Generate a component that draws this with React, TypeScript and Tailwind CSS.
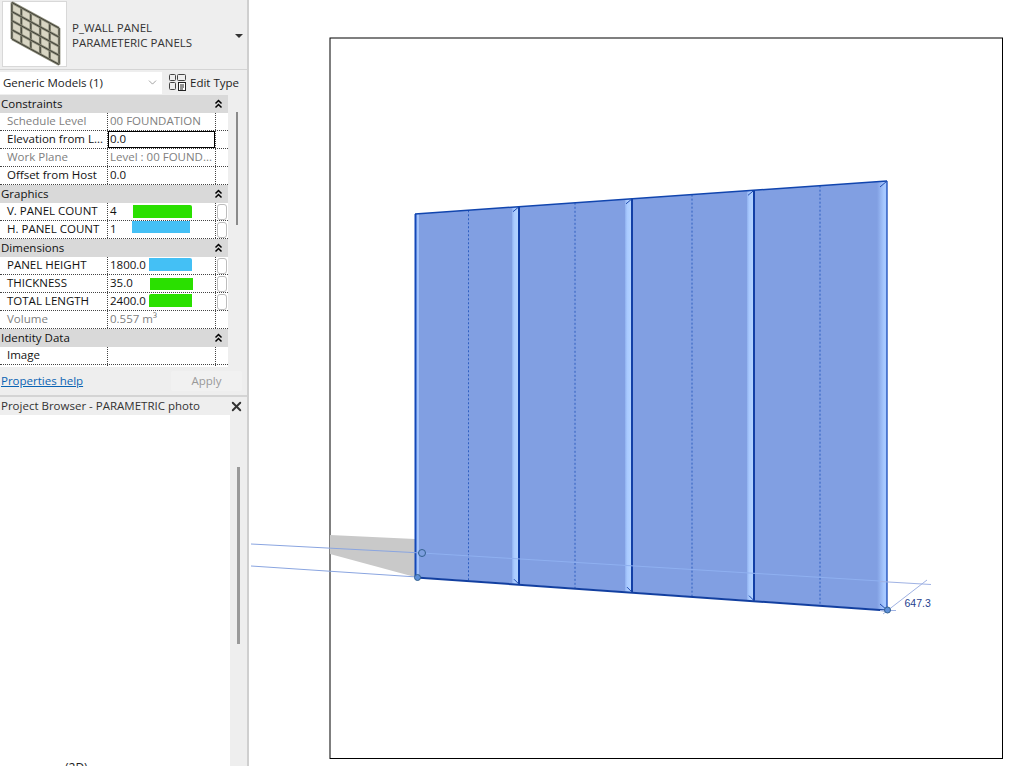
import React from "react";
import { ChevronDown, X } from "lucide-react";

type Row = {
  label?: string;
  value?: string;
  header?: boolean;
  dim?: boolean;
  selected?: boolean;
  assoc?: boolean;
  mark?: string;
};

const rows: Row[] = [
  { label: "Constraints", header: true },
  { label: "Schedule Level", value: "00 FOUNDATION", dim: true },
  { label: "Elevation from L...", value: "0.0", selected: true },
  { label: "Work Plane", value: "Level : 00 FOUND...", dim: true },
  { label: "Offset from Host", value: "0.0" },
  { label: "Graphics", header: true },
  { label: "V. PANEL COUNT", value: "4", assoc: true, mark: "left-[25px] top-[2px] w-[59px] h-[13px] bg-[#2ae000] rounded-tr-[2px]" },
  { label: "H. PANEL COUNT", value: "1", assoc: true, mark: "left-[24px] top-0 w-[58px] h-[12px] bg-[#44c0f5]" },
  { label: "Dimensions", header: true },
  { label: "PANEL HEIGHT", value: "1800.0", assoc: true, mark: "left-[41px] top-px w-[43px] h-[13px] bg-[#44c0f5] rounded-tr-[2px]" },
  { label: "THICKNESS", value: "35.0", assoc: true, mark: "left-[42px] top-[3px] w-[43px] h-[12px] bg-[#2ae000]" },
  { label: "TOTAL LENGTH", value: "2400.0", assoc: true, mark: "left-[41px] top-px w-[43px] h-[13px] bg-[#2ae000] rounded-tl-[2px]" },
  { label: "Volume", value: "0.557 m³", dim: true },
  { label: "Identity Data", header: true },
  { label: "Image", value: "" },
  { value: "" },
];

const PropRow = ({ row }: { row: Row }) => {
  if (row.header) {
    return (
      <div className="h-[18px] shrink-0 bg-[#d9d9d9] flex items-center justify-between pl-px pr-[5px] text-[11.5px] leading-none text-[#111]">
        <span>{row.label}</span>
        <svg width="9" height="10" viewBox="0 0 9 10" fill="none" stroke="#000" strokeWidth="1.5">
          <path d="M1.5 4.5L4.5 1.5L7.5 4.5M1.5 8.5L4.5 5.5L7.5 8.5" />
        </svg>
      </div>
    );
  }
  const color = row.dim ? "text-[#808080]" : "text-[#111]";
  return (
    <div className={`h-[18px] shrink-0 flex bg-white border-b border-dotted border-[#444] text-[11.5px] leading-none ${color}`}>
      <div className="w-[108px] shrink-0 border-r border-dotted border-[#444] pl-[7px] pb-[2px] flex items-center whitespace-nowrap overflow-hidden">
        {row.label}
      </div>
      <div
        className={`relative w-[107px] shrink-0 pb-[2px] flex items-center whitespace-nowrap overflow-hidden ${
          row.selected ? "border border-black pl-px" : "pl-[2px]"
        }`}
      >
        {row.value}
        {row.mark && <span className={`absolute ${row.mark}`} />}
      </div>
      <div className="flex-1 border-l border-dotted border-[#444] flex items-center justify-center">
        {row.assoc && <span className="w-[10px] h-[16px] rounded-[3px] border border-[#bdbdbd] bg-white" />}
      </div>
    </div>
  );
};

const Thumb = () => {
  const cols = [0, 1, 2, 3, 4, 5];
  const lines = [0, 1, 2, 3, 4];
  return (
    <svg width="64" height="66" viewBox="0 0 64 66" fill="none">
      <path d="M9 1L57 27V64L9 38Z" fill="#d8d5c3" />
      {cols.map((c) => {
        const x = 9 + c * 9.6;
        const y = 1 + c * 5.2;
        return (
          <g key={c}>
            <path d={`M${x} ${y}V${y + 37}`} stroke="#8a8a78" strokeWidth="2.6" />
            <path d={`M${x} ${y}V${y + 37}`} stroke="#3f3f36" strokeWidth="1" />
          </g>
        );
      })}
      {lines.map((l) => {
        const y = 1 + l * 9.25;
        return (
          <g key={l}>
            <path d={`M9 ${y}L57 ${y + 26}`} stroke="#8a8a78" strokeWidth="2.6" />
            <path d={`M9 ${y}L57 ${y + 26}`} stroke="#3f3f36" strokeWidth="1" />
          </g>
        );
      })}
    </svg>
  );
};

const EditTypeIcon = () => (
  <svg width="18" height="17" viewBox="0 0 18 17" fill="none" stroke="#444" strokeWidth="1">
    <rect x="0.5" y="0.5" width="6" height="6" rx="1" />
    <rect x="0.5" y="8.5" width="6" height="7" rx="1" />
    <rect x="8.5" y="0.5" width="8" height="6" rx="1" />
    <rect x="9.5" y="8.5" width="7" height="8" fill="#fff" stroke="#222" />
    <path d="M11 11H15M11 13H15M11 15H14" stroke="#222" />
  </svg>
);

const Viewport = () => {
  const topY = (x: number) => 214 - (x - 415) * 0.0699;
  const botY = (x: number) => 577 + (x - 416) * 0.07;
  const seams = [519, 632, 754];
  const dashes = [468.5, 575, 692, 820];
  return (
    <svg className="flex-1 h-[766px] block" viewBox="249 0 760 766" fill="none">
      <defs>
        <linearGradient id="seam" x1="0" x2="1" y1="0" y2="0">
          <stop offset="0" stopColor="#8fb0ee" />
          <stop offset="0.3" stopColor="#a9caff" />
          <stop offset="0.8" stopColor="#b2d2ff" />
          <stop offset="1" stopColor="#8fb6f8" />
        </linearGradient>
        <linearGradient id="edge" x1="0" x2="1" y1="0" y2="0">
          <stop offset="0" stopColor="#819fe2" />
          <stop offset="0.7" stopColor="#a6c8ff" />
          <stop offset="1" stopColor="#a6c8ff" />
        </linearGradient>
      </defs>
      <rect x="330" y="38" width="672.5" height="720.5" stroke="#000" />
      <polygon points="330,535 415,539 415,577 330,554" fill="#c9c9c9" />
      <polygon points="415,214 887,181 887,610 416,577" fill="#819fe2" />
      {seams.map((x) => (
        <g key={x}>
          <polygon
            points={`${x - 7},${topY(x - 7) + 1} ${x},${topY(x)} ${x},${botY(x)} ${x - 7},${botY(x - 7)}`}
            fill="url(#seam)"
          />
          <path d={`M${x} ${topY(x)}V${botY(x)}`} stroke="#123fa6" strokeWidth="2" />
          <path d={`M${x - 6} ${topY(x) + 5}L${x} ${topY(x)}M${x - 5} ${botY(x) - 5}L${x} ${botY(x)}`} stroke="#1f4bb0" />
        </g>
      ))}
      <polygon points="877,182 887,181 887,610 877,609" fill="url(#edge)" />
      <polygon points="416,214 419,214 419,577 416,577" fill="#a3c2fa" />
      {dashes.map((x) => (
        <path key={x} d={`M${x} ${topY(x)}V${botY(x)}`} stroke="#2f5fc0" strokeDasharray="2 2" />
      ))}
      <path d="M415.5 214V577" stroke="#1448b8" strokeWidth="2" />
      <path d="M887 181V610" stroke="#1448b8" strokeWidth="1.3" />
      <path d="M415 214L887 181" stroke="#1145ae" strokeWidth="1.5" />
      <path d="M416 577.5L887 610.5" stroke="#123fa0" strokeWidth="2" />
      <path d="M880 187L887 181M880 604L887 610" stroke="#1f4bb0" />
      <path d="M251 544L422 553" stroke="#8aa5e0" />
      <path d="M422 553L880 581" stroke="#8fb0f0" />
      <path d="M880 581.5L931 584.5" stroke="#9fb2e4" />
      <path d="M251 566L417 577" stroke="#8aa5e0" />
      <path d="M883 614L927 580" stroke="#9fb2e4" />
      <path d="M880 610.5L896 610.5" stroke="#9fb2e4" />
      <circle cx="422" cy="553" r="3.5" fill="#7d9fe0" stroke="#33618f" />
      <circle cx="417.5" cy="577.5" r="3" fill="#5d8fd8" stroke="#33618f" />
      <circle cx="887.5" cy="610" r="3" fill="#5d8fd8" stroke="#33618f" />
      <text x="904.5" y="607" fontFamily="Liberation Sans, sans-serif" fontSize="10.5" fill="#1f3f8f">
        647.3
      </text>
    </svg>
  );
};

export default function App() {
  return (
    <div className="w-[1009px] h-[766px] flex bg-white overflow-hidden font-['Open_Sans',sans-serif]">
      <div className="w-[249px] h-[766px] shrink-0 flex flex-col bg-[#eeeeee] border-r-2 border-[#cfcfcf]">
        {/* type selector */}
        <div className="h-[70px] shrink-0 flex border-b border-[#d4d4d4] pt-px pl-[2px]">
          <div className="w-[65px] h-[66px] bg-white border border-[#d8d8d8] flex items-center justify-center">
            <Thumb />
          </div>
          <div className="ml-[5px] pt-[19px] text-[11.5px] leading-[15px] text-[#333] whitespace-nowrap">
            <div>P_WALL PANEL</div>
            <div>PARAMETERIC PANELS</div>
          </div>
          <div className="ml-auto mr-[4px] mt-[33px] w-0 h-0 border-x-[4px] border-x-transparent border-t-[4px] border-t-[#333]" />
        </div>
        <div className="h-[25px] shrink-0 flex items-center">
          <div className="w-[162px] h-[22px] bg-white flex items-center justify-between pl-[3px] pr-[3px] text-[11.5px] text-[#222]">
            <span>Generic Models (1)</span>
            <ChevronDown size={13} strokeWidth={1} color="#555" />
          </div>
          <div className="ml-[7px] flex items-center gap-[3px] text-[11.5px] text-[#222] whitespace-nowrap">
            <EditTypeIcon />
            <span>Edit Type</span>
          </div>
        </div>
        {/* properties */}
        <div className="h-[272px] shrink-0 flex">
          <div className="w-[228px] h-[272px] shrink-0 flex flex-col overflow-hidden">
            {rows.map((row, i) => (
              <PropRow key={i} row={row} />
            ))}
          </div>
          <div className="flex-1 pl-[8px] pt-[17px]">
            <div className="w-[2px] h-[113px] bg-[#8a8a8a]" />
          </div>
        </div>
        <div className="h-[28px] shrink-0 flex items-center justify-between pl-px pr-[5px] text-[11.5px]">
          <span className="text-[#0a64b4] underline">Properties help</span>
          <div className="w-[71px] h-[20px] rounded-[2px] bg-[#f1f1f1] flex items-center justify-center text-[#999]">
            Apply
          </div>
        </div>
        {/* project browser */}
        <div className="h-[20px] shrink-0 flex items-center justify-between border-t-2 border-[#d4d4d4] pl-px pr-[3px] text-[11.5px] text-[#333] whitespace-nowrap">
          <span>Project Browser - PARAMETRIC photo</span>
          <X size={15} strokeWidth={3} color="#333" />
        </div>
        <div className="flex-1 flex min-h-0">
          <div className="w-[230px] bg-white flex flex-col justify-end overflow-hidden">
            <div className="pl-[65px] h-[14px] -mb-[9px] text-[12px] leading-[14px] text-[#222]">(2D)</div>
          </div>
          <div className="flex-1 pl-[7px] pt-[52px]">
            <div className="w-[3px] h-[177px] bg-[#9a9a9a]" />
          </div>
        </div>
      </div>
      <Viewport />
    </div>
  );
}
